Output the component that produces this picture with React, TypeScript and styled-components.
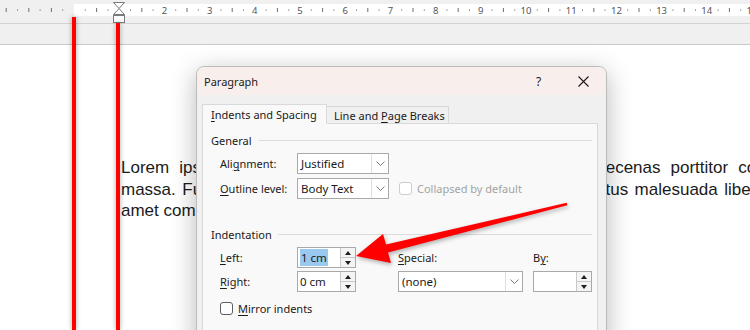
import React from "react";
import styled, { createGlobalStyle } from "styled-components";

const GlobalStyle = createGlobalStyle`
  html, body {
    margin: 0;
    padding: 0;
    overflow: hidden;
    background: #ffffff;
  }
`;

const CM = 45.2;
const ORIGIN = 74;

const Screen = styled.div`
  position: relative;
  width: 750px;
  height: 330px;
  overflow: hidden;
  display: flex;
  flex-direction: column;
  background: #ffffff;
`;

const RulerBar = styled.div`
  height: 23px;
  background: #f0f0f0;
  border-bottom: 1px solid #d3d3d3;
  flex-shrink: 0;
`;

const RibbonBand = styled.div`
  height: 20px;
  background: #f0f0f0;
  border-bottom: 1px solid #c9c9c9;
  flex-shrink: 0;
`;

const Document = styled.div`
  flex: 1;
  background: #ffffff;
`;

const Para = styled.div`
  width: 673px;
  margin: 112px 0 0 121px;
  font-family: "Liberation Sans", Arial, sans-serif;
  font-size: 17px;
  line-height: 21.5px;
  color: #1b1b1b;
`;

const Line = styled.div<{ $last?: boolean }>`
  text-align: ${(p) => (p.$last ? "left" : "justify")};
  text-align-last: ${(p) => (p.$last ? "left" : "justify")};
`;

const MarginGuide = styled.div<{ $left: number; $top: number }>`
  position: absolute;
  left: ${(p) => p.$left}px;
  top: ${(p) => p.$top}px;
  bottom: 0;
  width: 4px;
  background: #ff0000;
  box-shadow: 0 0 5px rgba(0, 0, 0, 0.35);
`;

const Overlay = styled.svg`
  position: absolute;
  left: 0;
  top: 0;
  pointer-events: none;
  filter: drop-shadow(1px 2px 2px rgba(0, 0, 0, 0.3));
`;

/* ---------- dialog ---------- */

const Dialog = styled.div`
  position: absolute;
  left: 196px;
  top: 66px;
  width: 411px;
  height: 300px;
  box-sizing: border-box;
  border: 1px solid #bcbcbc;
  border-radius: 8px;
  background: #f0f0f0;
  box-shadow: 0 6px 26px rgba(0, 0, 0, 0.28);
  font-family: "Noto Sans", sans-serif;
  font-size: 11px;
  color: #1a1a1a;
  overflow: hidden;
  display: flex;
  flex-direction: column;
`;

const TitleBar = styled.div`
  height: 28px;
  background: #f8efec;
  display: flex;
  align-items: center;
  padding-left: 7px;
`;

const Title = styled.div`
  flex: 1;
  font-size: 11px;
`;

const TitleButton = styled.div`
  width: 45px;
  height: 28px;
  display: flex;
  align-items: center;
  justify-content: center;
  font-size: 12px;
  color: #1a1a1a;
`;

const Body = styled.div`
  flex: 1;
  padding: 9px 8px 0 5px;
  display: flex;
  flex-direction: column;
`;

const TabRow = styled.div`
  display: flex;
  align-items: flex-end;
  height: 20px;
  position: relative;
  z-index: 1;
  margin-bottom: -1px;
`;

const Tab = styled.div<{ $active?: boolean; $width: number }>`
  width: ${(p) => p.$width}px;
  height: ${(p) => (p.$active ? 20 : 18)}px;
  box-sizing: border-box;
  border: 1px solid #d9d9d9;
  border-bottom: ${(p) => (p.$active ? "1px solid #f9f9f9" : "1px solid #d9d9d9")};
  border-left: ${(p) => (p.$active ? "1px solid #d9d9d9" : "none")};
  background: ${(p) => (p.$active ? "#f9f9f9" : "#f0f0f0")};
  padding-left: ${(p) => (p.$active ? 8 : 7)}px;
  display: flex;
  align-items: center;
  padding-top: ${(p) => (p.$active ? 1 : 0)}px;
`;

const Panel = styled.div`
  flex: 1;
  background: #f9f9f9;
  border: 1px solid #d9d9d9;
  padding: 8px 5px 0 8px;
  display: flex;
  flex-direction: column;
`;

const SectionHead = styled.div<{ $gap?: number }>`
  display: flex;
  align-items: center;
  gap: 6px;
  height: 16px;
  margin-top: ${(p) => p.$gap ?? 0}px;

  &::after {
    content: "";
    flex: 1;
    height: 1px;
    background: #dcdcdc;
  }
`;

const FieldRow = styled.div<{ $top: number }>`
  display: flex;
  align-items: center;
  padding-left: 9px;
  margin-top: ${(p) => p.$top}px;
  height: 21px;
`;

const Label = styled.div<{ $width?: number }>`
  width: ${(p) => (p.$width ? `${p.$width}px` : "auto")};
  flex-shrink: 0;
`;

const Key = styled.span`
  text-decoration: underline;
  text-underline-offset: 2px;
`;

const SelectBox = styled.div<{ $width: number }>`
  width: ${(p) => p.$width}px;
  height: 21px;
  box-sizing: border-box;
  border: 1px solid #a9a9a9;
  background: #ffffff;
  display: flex;
  align-items: stretch;
`;

const SelectText = styled.div`
  flex: 1;
  padding-left: 3px;
  display: flex;
  align-items: center;
  font-size: 11.5px;
`;

const ChevronCell = styled.div`
  width: 16px;
  border-left: 1px solid #dedede;
  display: flex;
  align-items: center;
  justify-content: center;
`;

const CheckRow = styled.div<{ $disabled?: boolean }>`
  display: flex;
  align-items: center;
  gap: 5px;
  color: ${(p) => (p.$disabled ? "#a3a3a3" : "#1a1a1a")};
`;

const CheckSquare = styled.div<{ $disabled?: boolean }>`
  width: 13px;
  height: 13px;
  box-sizing: border-box;
  border: 1px solid ${(p) => (p.$disabled ? "#cdcdcd" : "#5e5e5e")};
  border-radius: 3px;
  background: #ffffff;
`;

const IndentGrid = styled.div`
  display: grid;
  grid-template-columns: 77px 101px 135px 59px;
  grid-template-rows: 21px 21px;
  row-gap: 3px;
  align-items: center;
  padding-left: 9px;
  margin-top: 5px;
`;

const SpinBox = styled.div`
  width: 59px;
  height: 21px;
  box-sizing: border-box;
  border: 1px solid #a9a9a9;
  background: #ffffff;
  display: flex;
`;

const SpinValue = styled.div`
  flex: 1;
  display: flex;
  align-items: center;
  padding-left: 2px;
  font-size: 11.5px;
`;

const Selected = styled.span`
  background: #99c9ef;
  padding: 1px 1px 1px 1px;
`;

const SpinButtons = styled.div`
  width: 14px;
  display: flex;
  flex-direction: column;
  border-left: 1px solid #c9c9c9;
  background: #f4f4f4;
`;

const SpinHalf = styled.div<{ $down?: boolean }>`
  flex: 1;
  display: flex;
  align-items: center;
  justify-content: center;
  border-top: ${(p) => (p.$down ? "1px solid #c9c9c9" : "none")};

  &::before {
    content: "";
    width: 0;
    height: 0;
    border-left: 3.5px solid transparent;
    border-right: 3.5px solid transparent;
    ${(p) =>
      p.$down ? "border-top: 4px solid #1e1e1e;" : "border-bottom: 4px solid #1e1e1e;"}
  }
`;

const MirrorRow = styled.div`
  padding-left: 9px;
  margin-top: 9px;
`;

const Chevron = () => (
  <svg width="9" height="5" viewBox="0 0 9 5">
    <polyline points="0.5,0.5 4.5,4.5 8.5,0.5" fill="none" stroke="#7c7c7c" strokeWidth="1" />
  </svg>
);

const Select = ({ value, width }: { value: string; width: number }) => (
  <SelectBox $width={width}>
    <SelectText>{value}</SelectText>
    <ChevronCell>
      <Chevron />
    </ChevronCell>
  </SelectBox>
);

const Spinner = ({ children }: { children?: React.ReactNode }) => (
  <SpinBox>
    <SpinValue>{children}</SpinValue>
    <SpinButtons>
      <SpinHalf />
      <SpinHalf $down />
    </SpinButtons>
  </SpinBox>
);

const Ruler = () => {
  const marks: React.ReactNode[] = [];
  for (let q = -6; q <= 62; q++) {
    const x = ORIGIN + (q * CM) / 4;
    if (x < 0 || x > 752) continue;
    const r = ((q % 4) + 4) % 4;
    if (r === 0) {
      const n = Math.abs(q / 4);
      if (n === 0 || q === 4) continue;
      if (q < 0) {
        marks.push(<rect key={q} x={x - 0.5} y={8} width={1} height={4} fill="#6e6e6e" />);
      } else {
        marks.push(
          <text key={q} x={x} y={13.5} fontSize="9.5" fill="#555" textAnchor="middle" fontFamily="Noto Sans, sans-serif">
            {n}
          </text>
        );
      }
    } else if (r === 2) {
      marks.push(<rect key={q} x={x - 0.5} y={8} width={1} height={4} fill="#6e6e6e" />);
    } else {
      marks.push(<rect key={q} x={x - 0.5} y={9.5} width={1} height={1.2} fill="#6e6e6e" />);
    }
  }
  return (
    <svg width="750" height="23" viewBox="0 0 750 23">
      <rect x={ORIGIN} y={4} width={750 - ORIGIN} height={12} fill="#ffffff" />
      {marks}
      <g fill="#ffffff" stroke="#7a7a7a" strokeWidth="1">
        <polygon points="113.5,2.5 124.5,2.5 119,8.5" />
        <polygon points="119,8.5 113.5,14.5 124.5,14.5" />
        <rect x={113.5} y={15.5} width={11} height={7} />
      </g>
    </svg>
  );
};

export default function App() {
  return (
    <>
      <GlobalStyle />
      <Screen>
        <RulerBar>
          <Ruler />
        </RulerBar>
        <RibbonBand />
        <Document>
          <Para>
            <Line>Lorem ipsum dolor sit amet, consectetur adipiscing elit. Maecenas porttitor congue</Line>
            <Line>massa. Fusce posuere, magna sed pulvinar ultricies, purus lectus malesuada libero, sit</Line>
            <Line $last>amet commodo magna eros quis urna.</Line>
          </Para>
        </Document>

        <MarginGuide $left={72} $top={17} />
        <MarginGuide $left={116} $top={23} />

        <Dialog>
          <TitleBar>
            <Title>Paragraph</Title>
            <TitleButton>?</TitleButton>
            <TitleButton>
              <svg width="11" height="11" viewBox="0 0 11 11">
                <path d="M0.5 0.5 L10.5 10.5 M10.5 0.5 L0.5 10.5" stroke="#1a1a1a" strokeWidth="1.1" />
              </svg>
            </TitleButton>
          </TitleBar>
          <Body>
            <TabRow>
              <Tab $active $width={125}>
                <span>
                  <Key>I</Key>ndents and Spacing
                </span>
              </Tab>
              <Tab $width={122}>
                <span>
                  Line and <Key>P</Key>age Breaks
                </span>
              </Tab>
            </TabRow>
            <Panel>
              <SectionHead>General</SectionHead>
              <FieldRow $top={5}>
                <Label $width={77}>
                  Ali<Key>g</Key>nment:
                </Label>
                <Select value="Justified" width={92} />
              </FieldRow>
              <FieldRow $top={4}>
                <Label $width={77}>
                  <Key>O</Key>utline level:
                </Label>
                <Select value="Body Text" width={92} />
                <CheckRow $disabled style={{ marginLeft: 10 }}>
                  <CheckSquare $disabled />
                  Collapsed by default
                </CheckRow>
              </FieldRow>

              <SectionHead $gap={27}>Indentation</SectionHead>
              <IndentGrid>
                <Label>
                  <Key>L</Key>eft:
                </Label>
                <Spinner>
                  <Selected>1 cm</Selected>
                </Spinner>
                <Label>
                  <Key>S</Key>pecial:
                </Label>
                <Label>
                  B<Key>y</Key>:
                </Label>
                <Label>
                  <Key>R</Key>ight:
                </Label>
                <Spinner>0 cm</Spinner>
                <Select value="(none)" width={125} />
                <Spinner />
              </IndentGrid>
              <MirrorRow>
                <CheckRow>
                  <CheckSquare />
                  <span>
                    <Key>M</Key>irror indents
                  </span>
                </CheckRow>
              </MirrorRow>
            </Panel>
          </Body>
        </Dialog>

        <Overlay width="750" height="330" viewBox="0 0 750 330">
          <polygon
            points="356,256 391,263 388,252.5 567.3,205.3 566.7,202.7 386,244.5 383,234"
            fill="#ff0000"
          />
        </Overlay>
      </Screen>
    </>
  );
}
